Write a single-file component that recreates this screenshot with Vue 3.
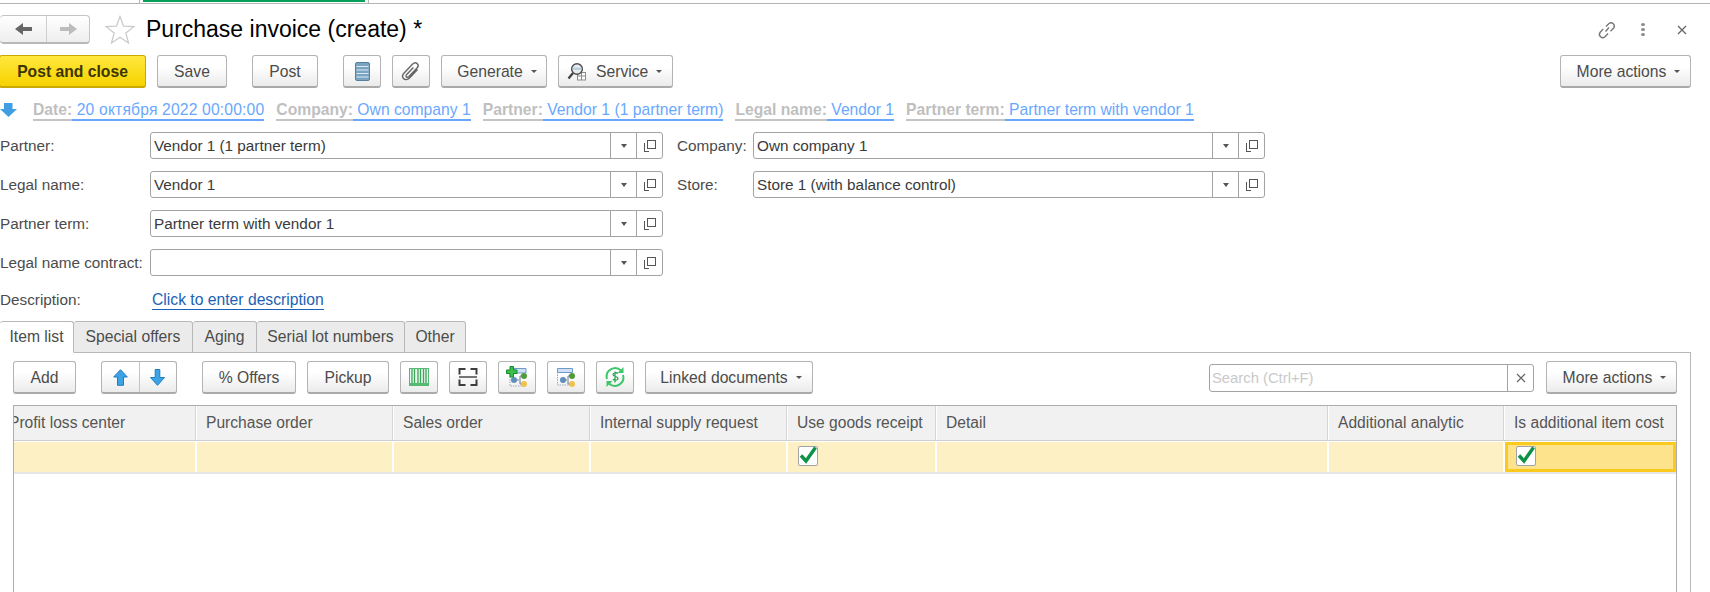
<script setup>
const crumbs = [
  ['Date:', '20 октября 2022 00:00:00'],
  ['Company:', 'Own company 1'],
  ['Partner:', 'Vendor 1 (1 partner term)'],
  ['Legal name:', 'Vendor 1'],
  ['Partner term:', 'Partner term with vendor 1']
]
const tabs = ['Item list', 'Special offers', 'Aging', 'Serial lot numbers', 'Other']
const columns = ['Profit loss center', 'Purchase order', 'Sales order', 'Internal supply request', 'Use goods receipt', 'Detail', 'Additional analytic', 'Is additional item cost']
</script>

<template>
  <div class="page">
    <div class="strip"><div class="strip-tab"><div class="strip-green"></div></div></div>

    <header class="head">
      <div class="nav">
        <span class="nav-cell">
          <svg width="18" height="14" viewBox="0 0 18 14"><path d="M0 7 8 1v4h9v4H8v4z" fill="#666"/></svg>
        </span>
        <span class="nav-cell">
          <svg width="18" height="14" viewBox="0 0 18 14"><path d="M18 7 10 1v4H1v4h9v4z" fill="#bcbcbc"/></svg>
        </span>
      </div>
      <svg class="star" width="30" height="29" viewBox="0 0 30 29"><path d="M15 1.500l3.600 9.700 10.300.4-8.100 6.400 2.800 10-8.600-5.700-8.600 5.700 2.800-10-8.100-6.400 10.300-.4z" fill="#fff" stroke="#c9c9c9" stroke-width="1.200"/></svg>
      <h1 class="title">Purchase invoice (create) *</h1>
      <div class="head-tools">
        <svg class="link-ic" width="20" height="20" viewBox="0 0 20 20" fill="none" stroke="#777" stroke-width="1.400"><path d="M8.500 11.500l3.500-4M9 6.500l3-3a3.300 3.300 0 0 1 4.700 4.500l-3.200 3.300M11 13.500l-3 3.200a3.300 3.300 0 0 1-4.800-4.500l3-3.300"/></svg>
        <span class="dots"><i></i><i></i><i></i></span>
        <svg width="12" height="12" viewBox="0 0 12 12" stroke="#666" stroke-width="1.300"><path d="M2 2l8 8M10 2l-8 8"/></svg>
      </div>
    </header>

    <div class="toolbar main-bar">
      <button class="btn primary">Post and close</button>
      <button class="btn save">Save</button>
      <button class="btn post">Post</button>
      <button class="btn icon stack-btn">
        <svg width="15" height="19" viewBox="0 0 15 19"><rect x=".5" y=".5" width="14" height="18" rx="1.500" fill="#7ba4c2" stroke="#54819f"/><path d="M1.500 4.500h12M1.500 8h12M1.500 11.500h12M1.500 15h12" stroke="#dbe8f1" stroke-width="1"/></svg>
      </button>
      <button class="btn icon">
        <svg width="22" height="22" viewBox="0 0 22 22" fill="none" stroke="#666" stroke-width="1.400"><path d="M17.500 9.500 9.500 18c-2 2-4.700 2-6 .6-1.400-1.500-1-3.800.6-5.500l8.600-9c1.500-1.500 3.500-1.500 4.600-.4 1.200 1.200 1 3-.3 4.400l-8 8.400c-.9.900-2 1-2.600.4-.6-.6-.5-1.600.3-2.500l6.700-7"/></svg>
      </button>
      <button class="btn gen">Generate<span class="caret"></span></button>
      <button class="btn service">
        <svg width="20" height="20" viewBox="0 0 20 20"><rect x="10.500" y="11.500" width="8" height="7.500" fill="#fff" stroke="#8b8b8b"/><path d="M10.500 15h8M14.500 11.500V19" stroke="#8b8b8b"/><circle cx="10" cy="8" r="5.300" fill="#e7eff3" stroke="#4d4d4d" stroke-width="1.500"/><path d="M5.500 6.500h9v2.500h-9z" fill="#bcd0dc"/><path d="M6 12 1.500 17.500" stroke="#3f3f3f" stroke-width="2.200"/></svg>
        <span>Service</span><span class="caret"></span>
      </button>
      <button class="btn more">More actions<span class="caret"></span></button>
    </div>

    <div class="crumbs">
      <svg class="crumb-arrow" width="17" height="14" viewBox="0 0 17 14"><path d="M4 0h8.500v6H17l-8.500 8L0 6h4z" fill="#3f9fe2"/></svg>
      <span v-for="c in crumbs" :key="c[0]" class="crumb"><b>{{ c[0] }}</b><a>&nbsp;{{ c[1] }}</a></span>
    </div>

    <section class="form">
      <label class="lbl">Partner:</label>
      <div class="field"><span class="val">Vendor 1 (1 partner term)</span><span class="fbtn"><span class="mini"></span></span><span class="fbtn cp"><span class="copy"></span></span></div>
      <label class="lbl second">Company:</label>
      <div class="field"><span class="val">Own company 1</span><span class="fbtn"><span class="mini"></span></span><span class="fbtn cp"><span class="copy"></span></span></div>

      <label class="lbl">Legal name:</label>
      <div class="field"><span class="val">Vendor 1</span><span class="fbtn"><span class="mini"></span></span><span class="fbtn cp"><span class="copy"></span></span></div>
      <label class="lbl second">Store:</label>
      <div class="field"><span class="val">Store 1 (with balance control)</span><span class="fbtn"><span class="mini"></span></span><span class="fbtn cp"><span class="copy"></span></span></div>

      <label class="lbl">Partner term:</label>
      <div class="field"><span class="val">Partner term with vendor 1</span><span class="fbtn"><span class="mini"></span></span><span class="fbtn cp"><span class="copy"></span></span></div>

      <label class="lbl">Legal name contract:</label>
      <div class="field"><span class="val"></span><span class="fbtn"><span class="mini"></span></span><span class="fbtn cp"><span class="copy"></span></span></div>
    </section>

    <div class="desc"><span class="lbl">Description:</span><a>Click to enter description</a></div>

    <nav class="tabs">
      <span v-for="(t, i) in tabs" :key="t" class="tab" :class="{ active: i === 0 }">{{ t }}</span>
    </nav>

    <section class="panel">
      <div class="toolbar list-bar">
        <button class="btn add">Add</button>
        <div class="updown">
          <span><svg width="15" height="17" viewBox="0 0 15 17"><path d="M7.500 .7 14.300 8H10.500v8.300h-6V8H.7z" fill="#3ea2e6" stroke="#1d7cbd"/></svg></span>
          <span><svg width="15" height="17" viewBox="0 0 15 17"><path d="M5.200 .5h4.600v8h4.700L7.500 16.300.5 8.500h4.700z" fill="#3ea2e6" stroke="#1d7cbd"/></svg></span>
        </div>
        <button class="btn offers">% Offers</button>
        <button class="btn pickup">Pickup</button>
        <button class="btn icon">
          <svg width="20" height="18" viewBox="0 0 20 18"><rect width="20" height="18" fill="#56b96f"/><rect x="1" y="1" width="18" height="14" fill="#e8f6ec"/><path d="M3 1v14M5.500 1v14M9 1v14M11.500 1v14M14.500 1v14M17 1v14" stroke="#3ea55c" stroke-width="1.300"/></svg>
        </button>
        <button class="btn icon">
          <svg width="20" height="18" viewBox="0 0 20 18" fill="none" stroke="#3d3d3d" stroke-width="2"><path d="M1.500 6.500V1h6M12.500 1h6v5.500M18.500 11.500V17h-6M7.500 17h-6v-5.500"/><path d="M1 9h18" stroke="#666" stroke-width="1.800"/></svg>
        </button>
        <button class="btn icon">
          <svg width="22" height="22" viewBox="0 0 22 22"><path d="M4 8v12h14" fill="none" stroke="#9ab" stroke-dasharray="1.500 1"/><path d="M8 2.500h12v4.500H8z" fill="#cfe0f2" stroke="#6b9bc9"/><path d="M8 14h5M14 10v8h4M14 10h4" fill="none" stroke="#6d7e8c"/><circle cx="8" cy="14" r="3" fill="#5f8fbf"/><circle cx="18" cy="10" r="3" fill="#4f9a3a"/><circle cx="18" cy="18" r="3" fill="#f0c24d"/><path d="M4 .5h3.500V4H11v3.500H7.500V11H4V7.500H.5V4H4z" fill="#3cc04c" stroke="#178a2a"/></svg>
        </button>
        <button class="btn icon">
          <svg width="20" height="20" viewBox="0 0 20 20"><path d="M1.500 5v13h13" fill="none" stroke="#9ab" stroke-dasharray="1.500 1"/><path d="M1.500 1.500h15v4h-15z" fill="#cfe0f2" stroke="#6b9bc9"/><path d="M7 13h4M12 9v8h4M12 9h4" fill="none" stroke="#6d7e8c"/><circle cx="7" cy="13" r="3" fill="#5f8fbf"/><circle cx="16" cy="9" r="3" fill="#4f9a3a"/><circle cx="16" cy="17" r="3" fill="#f0c24d"/></svg>
        </button>
        <button class="btn icon">
          <svg width="22" height="22" viewBox="0 0 22 22" fill="none" stroke="#3fc66a" stroke-width="2"><path d="M3 13A8.500 8.500 0 0 1 17 4.500M19 9a8.500 8.500 0 0 1-14 8.500"/><path d="M19.500 1v6h-6zM2.500 21v-6h6z" fill="#3fc66a" stroke="none"/><path d="M14 7.500c-1-1-4.800-1.200-5 1 0 2.500 5 1.500 5 4 0 2-3.800 2-5.200.8M11 5.500v11" stroke="#2aa853" stroke-width="1.300"/></svg>
        </button>
        <button class="btn linked">Linked documents<span class="caret"></span></button>
        <div class="search"><span class="search-input">Search (Ctrl+F)</span><span class="search-x"><svg width="10" height="10" viewBox="0 0 10 10" stroke="#666" stroke-width="1.200"><path d="M1 1l8 8M9 1l-8 8"/></svg></span></div>
        <button class="btn more2">More actions<span class="caret"></span></button>
      </div>

      <div class="table">
        <div class="grid headrow">
          <div v-for="(c, i) in columns" :key="c" class="th" :class="{ clip: i === 0 }"><span>{{ c }}</span></div>
        </div>
        <div class="grid datarow">
          <div class="td"></div><div class="td"></div><div class="td"></div><div class="td"></div>
          <div class="td"><span class="check"><svg width="20" height="20" viewBox="0 0 20 20"><path d="M3 10.500 8 16 17.500 2.500" fill="none" stroke="#0d9147" stroke-width="3.400"/></svg></span></div>
          <div class="td"></div><div class="td"></div>
          <div class="td sel"><span class="check"><svg width="20" height="20" viewBox="0 0 20 20"><path d="M3 10.500 8 16 17.500 2.500" fill="none" stroke="#0d9147" stroke-width="3.400"/></svg></span></div>
        </div>
      </div>
    </section>
  </div>
</template>

<style>
html, body { margin: 0; background: #fff; overflow: hidden; }
</style>

<style scoped>
.page { width: 1710px; height: 592px; overflow: hidden; background: #fff; font: 15.700px/1.2 "Liberation Sans", Arial, sans-serif; color: #4b4b4b; }
button { font: inherit; color: inherit; }
a { cursor: pointer; }

.strip { height: 3px; border-bottom: 1px solid #b4b4b4; display: flex; padding-left: 139px; }
.strip-tab { width: 222px; height: 3px; border-left: 1px solid #b4b4b4; border-right: 1px solid #b4b4b4; padding: 0 3px; }
.strip-green { height: 2px; background: #07a05a; }

.head { display: flex; align-items: center; height: 29px; margin-top: 11px; }
.nav { display: flex; width: 90px; height: 29px; box-sizing: border-box; border: 1px solid #c4c4c4; border-bottom: 2px solid #b8b8b8; border-left: 0; border-radius: 4px; background: linear-gradient(#fff, #eee); }
.nav-cell { flex: 1; display: flex; align-items: center; justify-content: center; padding-left: 3px; }
.nav-cell + .nav-cell { border-left: 1px solid #cfcfcf; padding-left: 0; }
.star { margin-left: 15px; }
.title { margin: 0 0 0 11px; font-weight: 400; font-size: 23px; line-height: 29px; color: #000; }
.head-tools { margin-left: auto; display: flex; align-items: center; margin-right: 22px; }
.link-ic { margin-right: 24px; }
.dots { display: flex; flex-direction: column; gap: 2px; margin-right: 31px; }
.dots i { display: block; width: 4px; height: 3px; border-radius: 50%; background: #8a8a8a; }

.toolbar { display: flex; align-items: stretch; }
.btn { box-sizing: border-box; padding: 1px 0 0; display: flex; align-items: center; justify-content: center; border: 1px solid #b4b4b4; border-bottom: 2px solid #aaa; border-radius: 3px; background: linear-gradient(#fff 35%, #ebebeb); white-space: nowrap; line-height: 30px; }
.icon { padding-top: 0; }
.main-bar { height: 33px; margin-top: 11px; margin-left: -1px; }
.primary { width: 147px; margin-right: 11px; font-weight: 700; color: #3c3500; border-color: #c9a800; background: linear-gradient(#ffe83d, #f6d200); }
.save { width: 70px; margin-right: 25px; }
.post { width: 66px; margin-right: 25px; }
.icon { width: 38px; margin-right: 11px; }
.gen { width: 106px; margin-right: 11px; padding-left: 6px; }
.service { width: 115px; justify-content: flex-start; padding-left: 8px; gap: 9px; }
.service svg { margin-top: -1px; }
.service .caret { margin-left: -1px; }
.more { width: 131px; margin-left: auto; margin-right: 19px; padding-left: 6px; }
.caret { display: inline-block; width: 0; height: 0; margin-left: 8px; border: 3px solid transparent; border-top: 3px solid #555; border-bottom: 0; }

.crumbs { position: relative; display: flex; gap: 12px; height: 19px; margin-top: 13px; padding-left: 33px; align-items: flex-start; font-size: 15.700px; }
.crumb-arrow { position: absolute; left: 0; top: 2px; }
.crumb { display: flex; white-space: nowrap; line-height: 18px; }
.crumb b { color: #bfbfbf; border-bottom: 2px solid #c4c4c4; }
.crumb a { color: #6aa8ff; border-bottom: 2px solid #6aa8ff; }
.crumb:first-of-type a { letter-spacing: .15px; }

.form { display: grid; grid-template-columns: 150px 513px 14px 76px 512px; grid-auto-rows: 27px; row-gap: 12px; margin-top: 12px; align-items: center; font-size: 15.300px; }
.lbl { grid-column: 1; color: #4b4b4b; white-space: nowrap; padding-top: 1px; }
.lbl.second { grid-column: 4; }
.field { box-sizing: border-box; height: 27px; display: flex; align-items: stretch; border: 1px solid #a3a3a3; border-radius: 3px; background: #fff; }
.val { flex: 1; padding-left: 3px; line-height: 26px; color: #3a3a3a; white-space: nowrap; overflow: hidden; }
.fbtn { box-sizing: border-box; width: 26px; display: flex; align-items: center; justify-content: center; border-left: 1px solid #a3a3a3; }
.mini { width: 0; height: 0; border: 3px solid transparent; border-top: 4px solid #555; border-bottom: 0; }
.copy { position: relative; display: block; box-sizing: border-box; width: 9px; height: 9px; margin: -3px 0 0 3px; border: 1px solid #555; background: #fff; }
.copy::before { content: ""; position: absolute; left: -4px; top: 2px; width: 4px; height: 8px; border-left: 1px solid #555; border-bottom: 1px solid #555; }

.desc { display: flex; height: 22px; margin-top: 13px; align-items: center; }
.desc .lbl { width: 152px; font-size: 15.300px; }
.desc a { color: #1c62b4; border-bottom: 1px solid #1c62b4; line-height: 18px; }

.tabs { display: flex; height: 31px; margin-top: 10px; }
.tab { box-sizing: border-box; height: 32px; padding-top: 6px; text-align: center; border: 1px solid #b8b8b8; border-left: 0; border-radius: 3px 3px 0 0; background: #ebebeb; white-space: nowrap; }
.tab:nth-child(1) { width: 74px; background: #fff; position: relative; z-index: 1; border-bottom: 1px solid #fff; }
.tab:nth-child(2) { width: 119px; }
.tab:nth-child(3) { width: 64px; }
.tab:nth-child(4) { width: 148px; }
.tab:nth-child(5) { width: 61px; }

.panel { box-sizing: border-box; width: 1691px; height: 300px; border-top: 1px solid #b8b8b8; border-right: 1px solid #b8b8b8; }
.list-bar { height: 33px; margin-top: 8px; margin-left: 13px; }
.add { width: 63px; margin-right: 25px; }
.updown { display: flex; box-sizing: border-box; width: 76px; margin-right: 25px; border: 1px solid #b4b4b4; border-bottom: 2px solid #aaa; border-radius: 3px; background: linear-gradient(#fff 35%, #ebebeb); }
.updown span { flex: 1; display: flex; align-items: center; justify-content: center; }
.updown span + span { border-left: 1px solid #c4c4c4; }
.offers { width: 94px; margin-right: 11px; }
.pickup { width: 82px; margin-right: 11px; }
.linked { width: 168px; padding-left: 4px; }
.search { box-sizing: border-box; display: flex; width: 325px; height: 28px; margin: 3px 0 0 auto; border: 1px solid #a3a3a3; border-radius: 3px; font-size: 14.800px; }
.search-input { flex: 1; padding-left: 2px; line-height: 26px; color: #c9c9c9; }
.search-x { width: 25px; display: flex; align-items: center; justify-content: center; border-left: 1px solid #a3a3a3; }
.more2 { width: 131px; margin-left: 12px; margin-right: 13px; padding-left: 6px; }

.table { box-sizing: border-box; width: 1664px; height: 190px; margin: 11px 0 0 13px; border: 1px solid #adadad; }
.grid { display: grid; grid-template-columns: 183px 197px 197px 197px 149px 392px 176px 171px; }
.headrow { height: 34px; background: #f1f1f1; border-bottom: 1px solid #cfcfcf; box-sizing: content-box; font-size: 15.600px; }
.th { border-right: 1px solid #fff; padding: 8px 0 0 9px; white-space: nowrap; overflow: hidden; color: #555; box-shadow: inset -1px 0 0 #d6d6d6; }
.th.clip { padding-left: 0; }
.th.clip span { display: block; margin-left: -5px; }
.th:last-child { border-right: 0; box-shadow: none; }
.datarow { height: 30px; margin-top: 1px; background: #fdf0c4; border-bottom: 2px solid #e6e6e6; box-sizing: content-box; }
.td { position: relative; border-right: 2px solid #fff; }
.td:last-child { border-right: 0; }
.check { position: absolute; left: 10px; top: 4px; box-sizing: border-box; width: 20px; height: 20px; display: block; border: 1px solid #a3a3a3; border-radius: 2px; background: #fff; }
.check svg { position: absolute; left: -1px; top: -2px; display: block; }
.sel { background: #fde38b; box-shadow: inset 0 0 0 3px #fcc91d; }
.sel .check { left: 11px; }
</style>
